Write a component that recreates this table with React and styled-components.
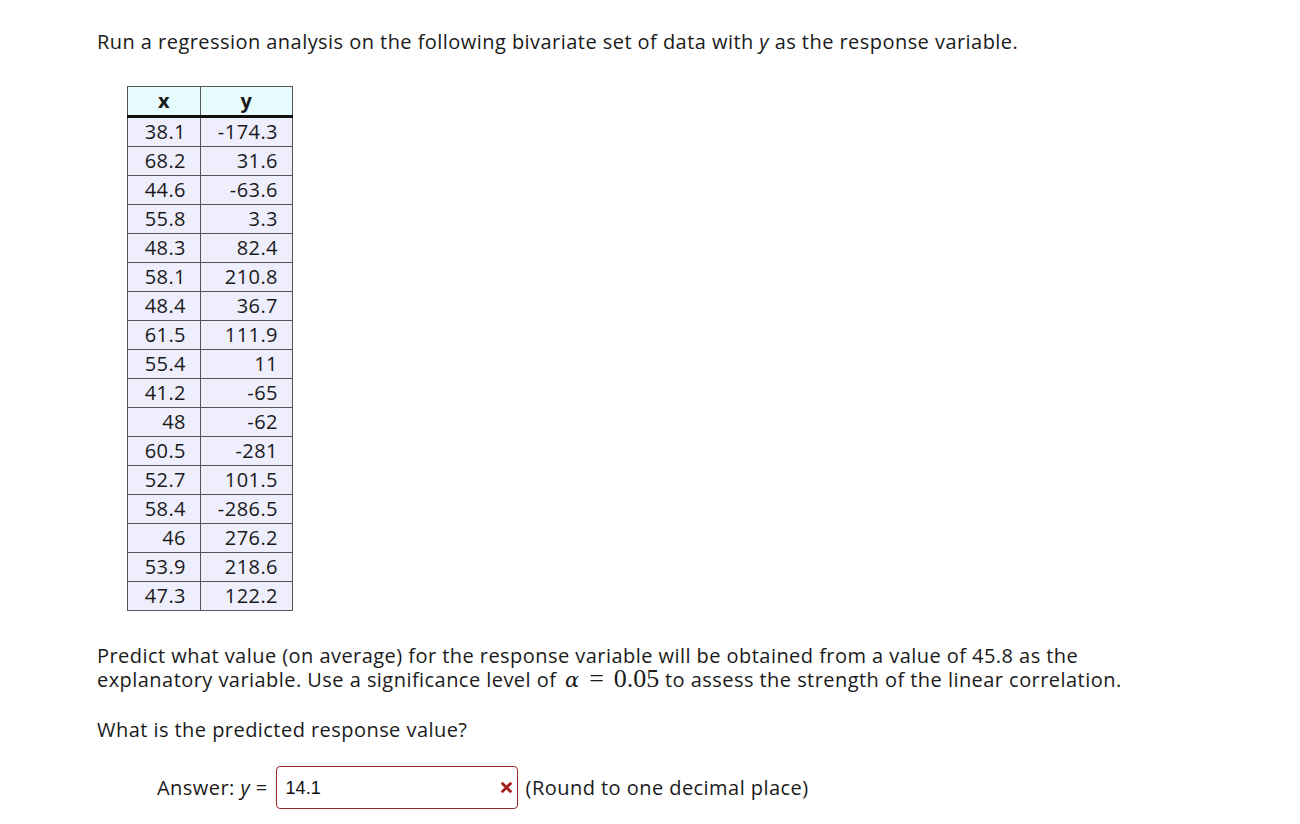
import styled, { createGlobalStyle } from "styled-components";

const rows = [
  ["38.1", "-174.3"],
  ["68.2", "31.6"],
  ["44.6", "-63.6"],
  ["55.8", "3.3"],
  ["48.3", "82.4"],
  ["58.1", "210.8"],
  ["48.4", "36.7"],
  ["61.5", "111.9"],
  ["55.4", "11"],
  ["41.2", "-65"],
  ["48", "-62"],
  ["60.5", "-281"],
  ["52.7", "101.5"],
  ["58.4", "-286.5"],
  ["46", "276.2"],
  ["53.9", "218.6"],
  ["47.3", "122.2"],
];

const GlobalStyle = createGlobalStyle`
  body {
    margin: 0;
    background: #fff;
    color: #1a1a1a;
    font-family: "Open Sans", Lato, sans-serif;
  }
`;

const Page = styled.div`
  padding: 30px 0 0 97px;
  font-size: 20px;
  line-height: 24px;
  letter-spacing: 0.45px;
`;

const Text = styled.p`
  margin: ${({ $mt }) => $mt || 0}px 0 0;
`;

const Table = styled.table`
  margin: 32px 0 0 30px;
  border-collapse: collapse;
  border: 1px solid #333;
`;

const HeadCell = styled.th`
  background: #e6fbfb;
  border: 1px solid #555;
  border-bottom: 3px solid #111;
  height: 28px;
  padding: 0;
  font-weight: bold;
  text-align: center;
  width: ${({ $w }) => $w}px;
`;

const Cell = styled.td`
  background: #eeeefd;
  border: 1px solid #555;
  height: 28px;
  padding: 0 14px 0 0;
  text-align: right;
`;

const Math = styled.span`
  font-family: "Liberation Serif", "DejaVu Serif", serif;
  font-size: 26px;
  line-height: 20px;
  letter-spacing: 0;
  margin: 0 ${({ $gap }) => $gap || 0}px;
`;

const Alpha = styled.i`
  font-family: "DejaVu Serif", serif;
  font-size: 21px;
  line-height: 20px;
  letter-spacing: 0;
  margin-left: 3px;
`;

const AnswerRow = styled.div`
  display: flex;
  align-items: center;
  margin: 24px 0 0 60px;
  gap: 8px;
`;

const InputBox = styled.div`
  display: flex;
  align-items: center;
  justify-content: space-between;
  width: 242px;
  height: 43px;
  box-sizing: border-box;
  border: 1px solid #9b2a2a;
  border-radius: 4px;
  padding: 0 3px 0 9px;
  font-family: "Liberation Sans", Arial, sans-serif;
  font-size: 18px;
  letter-spacing: 0;
  color: #111;
`;

const Cross = styled.svg`
  width: 15px;
  height: 15px;
`;

export default function App() {
  return (
    <>
      <GlobalStyle />
      <Page>
        <Text>
          Run a regression analysis on the following bivariate set of data with <i>y</i> as the response
          variable.
        </Text>
        <Table>
          <thead>
            <tr>
              <HeadCell $w={72}>x</HeadCell>
              <HeadCell $w={91}>y</HeadCell>
            </tr>
          </thead>
          <tbody>
            {rows.map(([x, y]) => (
              <tr key={x + y}>
                <Cell>{x}</Cell>
                <Cell>{y}</Cell>
              </tr>
            ))}
          </tbody>
        </Table>
        <Text $mt={33}>
          Predict what value (on average) for the response variable will be obtained from a value of 45.8 as the
          <br />
          explanatory variable. Use a significance level of <Alpha>α</Alpha>
          <Math $gap={10}>=</Math>
          <Math>0.05</Math> to assess the strength of the linear correlation.
        </Text>
        <Text $mt={26}>What is the predicted response value?</Text>
        <AnswerRow>
          <span>
            Answer: <i>y</i> =
          </span>
          <InputBox>
            14.1
            <Cross viewBox="0 0 14 14">
              <path d="M2.5 2.5 L11.5 11.5 M11.5 2.5 L2.5 11.5" stroke="#a32020" strokeWidth="2.6" />
            </Cross>
          </InputBox>
          <span>(Round to one decimal place)</span>
        </AnswerRow>
      </Page>
    </>
  );
}
